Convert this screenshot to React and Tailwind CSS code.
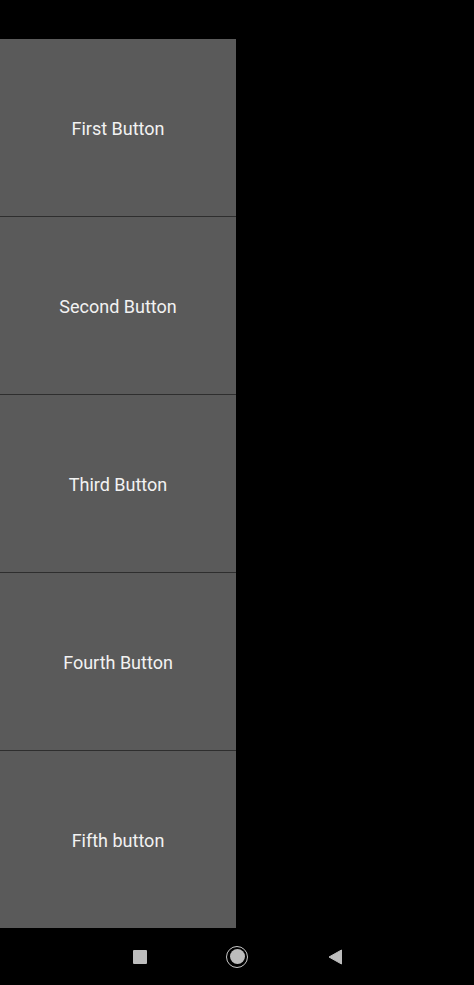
import React from 'react'

const buttons = ['First Button', 'Second Button', 'Third Button', 'Fourth Button', 'Fifth button']

export default function App() {
  return (
    <div className="w-[474px] h-[985px] bg-black flex flex-col" style={{ fontFamily: 'Roboto, "Noto Sans", sans-serif' }}>
      <div className="h-[39px]" />
      <div className="w-[236px] flex flex-col gap-px bg-[#2e2e2e]">
        {buttons.map(b => (
          <button key={b} className="h-[177px] bg-[#5a5a5a] flex items-center justify-center pt-[2px] text-[18px] text-[#f2f2f2]">
            {b}
          </button>
        ))}
      </div>
      <div className="flex-1 flex items-center justify-center">
        <div className="flex items-center w-[209px] justify-between">
          <div className="w-[14px] h-[14px] rounded-[1px] bg-[#bdbdbd]" />
          <div className="w-[22px] h-[22px] rounded-full border-[1.5px] border-[#c8c8c8] flex items-center justify-center">
            <div className="w-[15px] h-[15px] rounded-full bg-[#bdbdbd]" />
          </div>
          <svg width="14" height="16" viewBox="0 0 14 16">
            <path d="M13.5 1 L1 8 L13.5 15 Z" fill="#bdbdbd" stroke="#bdbdbd" strokeWidth="1" strokeLinejoin="round" />
          </svg>
        </div>
      </div>
    </div>
  )
}
